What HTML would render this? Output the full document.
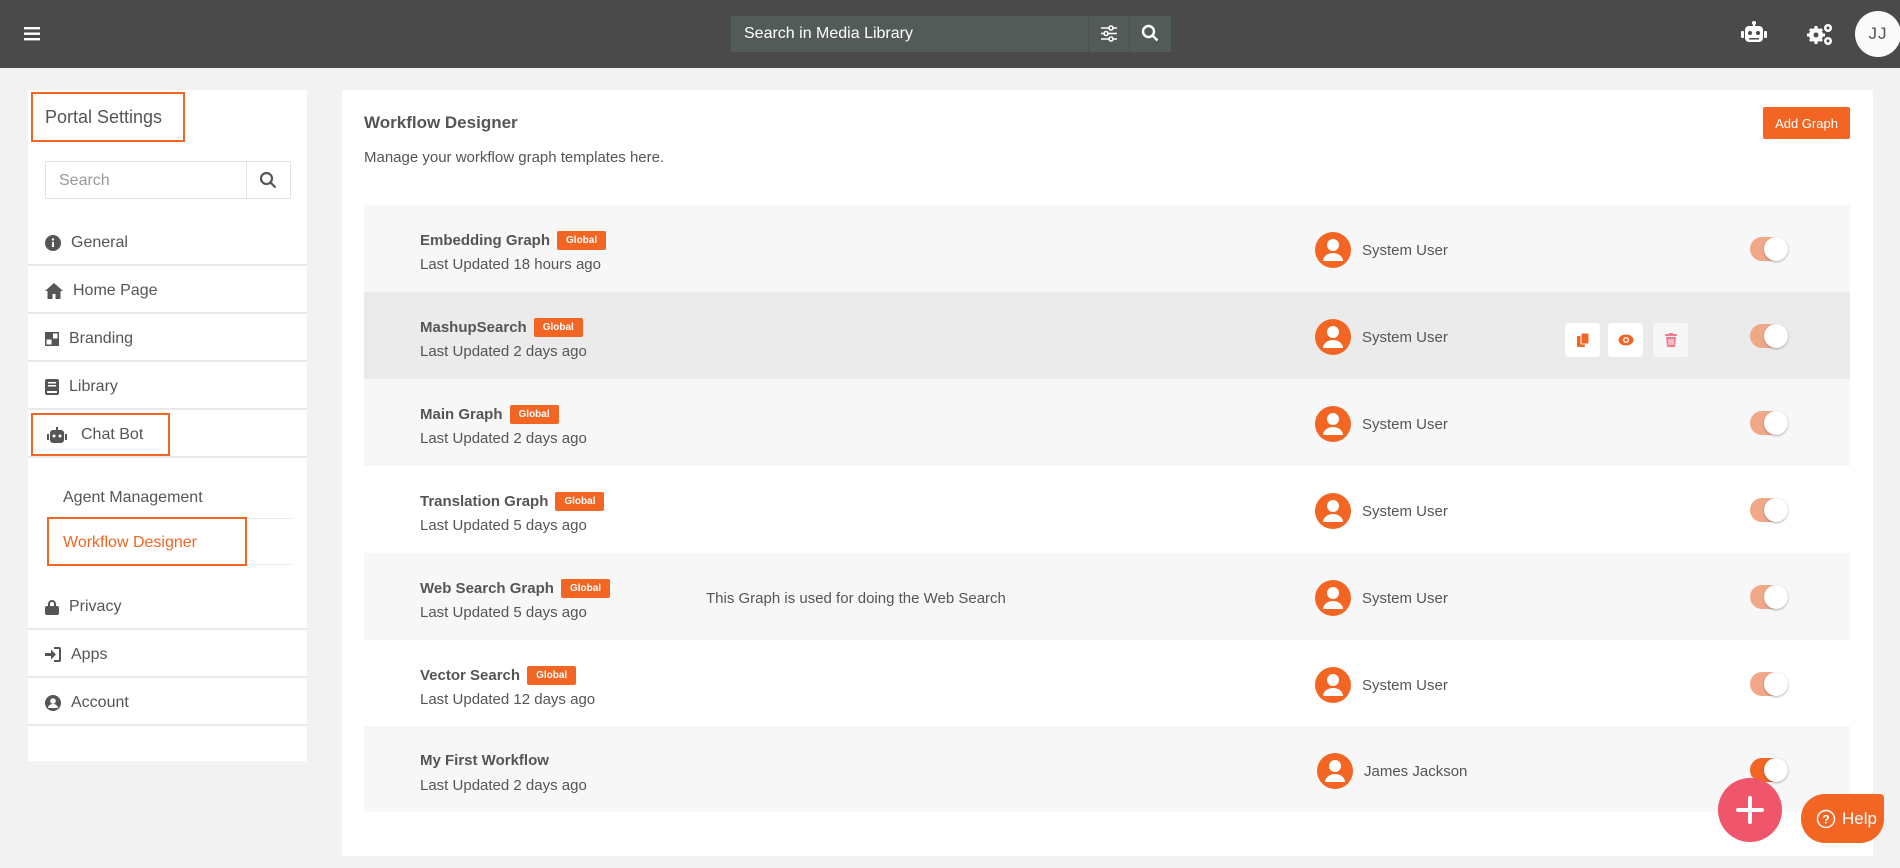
<!DOCTYPE html>
<html><head><meta charset="utf-8"><style>
*{box-sizing:border-box;margin:0;padding:0}
body{width:1900px;height:868px;background:#f2f2f2;font-family:"Liberation Sans",sans-serif;color:#555;position:relative;overflow:hidden}
.a{position:absolute}
.hdr{left:0;top:0;width:1900px;height:68px;background:#4a4a4a}
.side{left:28px;top:90px;width:279px;height:671px;background:#fff}
.nav{left:28px;width:279px;height:48px;border-bottom:2px solid #e8e8e8;font-size:16px;display:flex;align-items:center;padding-left:17px;padding-top:3px;color:#555}
.nav svg{margin-right:10px}
.box{border:2px solid #f26522}
.main{left:342px;top:90px;width:1531px;height:766px;background:#fff}
.row{left:364px;width:1486px;height:87px}
.t{left:56px;top:26px;font-size:15px;font-weight:bold;color:#555;display:flex;align-items:center}
.b{background:#f26522;color:#fff;font-size:10px;font-weight:bold;padding:4px 9px;margin-left:7px;border-radius:2px}
.s{left:56px;top:51px;font-size:15px;color:#555}
.av{left:951px;top:27px;width:36px;height:36px;border-radius:50%;background:#f26522;overflow:hidden}
.nm{left:998px;top:37px;font-size:15px}
.tg{left:1386px;top:32px;width:38px;height:24px;border-radius:12px;background:#f0a889}
.tg::after{content:"";position:absolute;right:0;top:0;width:24px;height:24px;border-radius:50%;background:#fff;box-shadow:0 1px 2px rgba(0,0,0,.3)}
.ab{top:31px;width:35px;height:34px;background:#fff;border-radius:3px;display:flex;align-items:center;justify-content:center}
</style></head><body>
<div class="a hdr"></div>
<svg class="a" style="left:24px;top:27px" width="16" height="14"><rect y="0" width="16" height="2.4" fill="#fff"/><rect y="5.5" width="16" height="2.4" fill="#fff"/><rect y="11" width="16" height="2.4" fill="#fff"/></svg>
<div class="a" style="left:731px;top:16px;width:440px;height:36px;background:#535b59"></div>
<div class="a" style="left:1088px;top:16px;width:1px;height:36px;background:#4a504e"></div>
<div class="a" style="left:1129px;top:16px;width:1px;height:36px;background:#4a504e"></div>
<div class="a" style="left:744px;top:25px;color:#fff;font-size:16px">Search in Media Library</div>
<svg class="a" style="left:1100px;top:25px" width="18" height="17" stroke="#fff" stroke-width="1.6" fill="none"><path d="M1 3h16M1 8.5h16M1 14h16"/><circle cx="11" cy="3" r="2" fill="#535b59"/><circle cx="6" cy="8.5" r="2" fill="#535b59"/><circle cx="11" cy="14" r="2" fill="#535b59"/></svg>
<svg class="a" style="left:1141px;top:24px" width="18" height="18" stroke="#fff" stroke-width="2.4" fill="none"><circle cx="7.5" cy="7.5" r="5.5"/><path d="M11.5 11.5l5 5"/></svg>
<svg class="a" style="left:1741px;top:21px" width="26" height="24" fill="#fff"><rect x="12" y="0" width="2" height="5"/><circle cx="13" cy="2" r="2"/><rect x="4" y="5" width="18" height="16" rx="4"/><rect x="0" y="10" width="3" height="7" rx="1"/><rect x="23" y="10" width="3" height="7" rx="1"/><circle cx="9" cy="12" r="2" fill="#4a4a4a"/><circle cx="17" cy="12" r="2" fill="#4a4a4a"/><rect x="8" y="17" width="10" height="1.5" fill="#4a4a4a"/></svg>
<svg class="a" style="left:1806px;top:22px" width="28" height="24" fill="#fff"><circle cx="10" cy="13" r="7"/><g stroke="#fff" stroke-width="3"><path d="M10 4v18M1 13h18M4 7l12 12M16 7L4 19"/></g><circle cx="10" cy="13" r="2.5" fill="#4a4a4a"/><circle cx="22" cy="6" r="4"/><circle cx="22" cy="6" r="1.5" fill="#4a4a4a"/><circle cx="22" cy="19" r="4"/><circle cx="22" cy="19" r="1.5" fill="#4a4a4a"/></svg>
<div class="a" style="left:1855px;top:11px;width:46px;height:46px;border-radius:50%;background:#fafafa;color:#555;font-size:17px;display:flex;align-items:center;justify-content:center;letter-spacing:1px">JJ</div>

<div class="a side"></div>
<div class="a box" style="left:31px;top:92px;width:154px;height:50px"></div>
<div class="a" style="left:45px;top:107px;font-size:18px;color:#555">Portal Settings</div>
<div class="a" style="left:45px;top:161px;width:246px;height:38px;border:1px solid #e3e3e3"></div>
<div class="a" style="left:246px;top:161px;width:1px;height:38px;background:#e3e3e3"></div>
<div class="a" style="left:59px;top:172px;font-size:16px;color:#999">Search</div>
<svg class="a" style="left:259px;top:171px" width="18" height="18" stroke="#555" stroke-width="2.2" fill="none"><circle cx="7.5" cy="7.5" r="5.5"/><path d="M11.5 11.5l5 5"/></svg>

<div class="a nav" style="top:218px"><svg width="16" height="16"><circle cx="8" cy="8" r="8" fill="#555"/><rect x="7" y="7" width="2" height="5" fill="#fff"/><circle cx="8" cy="4.5" r="1.2" fill="#fff"/></svg>General</div>
<div class="a nav" style="top:266px"><svg width="18" height="16" fill="#555"><path d="M9 0L0 8h2.5v8h5v-5h3v5h5V8H18z"/></svg>Home Page</div>
<div class="a nav" style="top:314px"><svg width="14" height="14"><rect width="14" height="14" fill="#555"/><rect x="8" y="1.5" width="4.5" height="5" fill="#fff"/><rect x="1.5" y="7.5" width="5" height="5" fill="#fff"/></svg>Branding</div>
<div class="a nav" style="top:362px"><svg width="14" height="16"><rect width="14" height="16" rx="2" fill="#555"/><rect x="3" y="3" width="8" height="1.5" fill="#fff"/><rect x="3" y="6" width="8" height="1.5" fill="#fff"/><rect x="2" y="12" width="10" height="2" fill="#fff"/></svg>Library</div>
<div class="a nav" style="top:410px;padding-left:19px"><svg width="20" height="16" fill="#555"><rect x="3" y="3" width="14" height="13" rx="3"/><rect x="9" y="0" width="2" height="3"/><rect x="0" y="7" width="2" height="6"/><rect x="18" y="7" width="2" height="6"/><circle cx="7" cy="9" r="1.5" fill="#fff"/><circle cx="13" cy="9" r="1.5" fill="#fff"/></svg><span style="margin-left:4px">Chat Bot</span></div>
<div class="a box" style="left:31px;top:413px;width:139px;height:43px"></div>
<div class="a" style="left:63px;top:489px;font-size:16px">Agent Management</div>
<div class="a" style="left:47px;top:518px;width:244px;height:1px;background:#e8e8e8"></div>
<div class="a" style="left:63px;top:534px;font-size:16px;color:#f26522">Workflow Designer</div>
<div class="a" style="left:47px;top:564px;width:244px;height:1px;background:#e8e8e8"></div>
<div class="a box" style="left:47px;top:517px;width:200px;height:49px"></div>
<div class="a nav" style="top:582px"><svg width="14" height="16" fill="#555"><path d="M3 7V5a4 4 0 018 0v2h-2V5a2 2 0 00-4 0v2z"/><rect y="7" width="14" height="9" rx="2"/></svg>Privacy</div>
<div class="a nav" style="top:630px"><svg width="16" height="15" fill="#555"><path d="M0 6h6V2.5L11 7.5 6 12.5V9H0z"/><path d="M9 0h5a2 2 0 012 2v11a2 2 0 01-2 2H9v-2h5V2H9z"/></svg>Apps</div>
<div class="a nav" style="top:678px"><svg width="16" height="16"><circle cx="8" cy="8" r="8" fill="#555"/><circle cx="8" cy="6" r="2.8" fill="#fff"/><path d="M3 13a5 4 0 0110 0z" fill="#fff"/></svg>Account</div>

<div class="a main"></div>
<div class="a" style="left:364px;top:113px;font-size:17px;font-weight:bold;color:#555">Workflow Designer</div>
<div class="a" style="left:364px;top:149px;font-size:15px;color:#555">Manage your workflow graph templates here.</div>
<div class="a" style="left:1763px;top:107px;width:87px;height:32px;background:#f26522;color:#fff;font-size:13px;border-radius:2px;display:flex;align-items:center;justify-content:center">Add Graph</div>

<div class="a row" style="top:205px;background:#f7f7f7"><div class="a t">Embedding Graph<span class="b">Global</span></div><div class="a s">Last Updated 18 hours ago</div><div class="a av"><svg width="36" height="36"><circle cx="18" cy="13" r="6" fill="#fff"/><path d="M8 29a10 8 0 0120 0z" fill="#fff"/></svg></div><div class="a nm">System User</div><div class="a tg"></div></div>
<div class="a row" style="top:292px;background:#ebebeb"><div class="a t">MashupSearch<span class="b">Global</span></div><div class="a s">Last Updated 2 days ago</div><div class="a av"><svg width="36" height="36"><circle cx="18" cy="13" r="6" fill="#fff"/><path d="M8 29a10 8 0 0120 0z" fill="#fff"/></svg></div><div class="a nm">System User</div>
<div class="a ab" style="left:1201px"><svg width="12" height="14" fill="#f26522"><rect x="0" y="3" width="8" height="11" rx="1"/><rect x="4" y="0" width="8" height="11" rx="1" stroke="#fff" stroke-width="1"/></svg></div>
<div class="a ab" style="left:1244px"><svg width="16" height="12"><ellipse cx="8" cy="6" rx="7.5" ry="5.5" fill="#f26522"/><circle cx="8" cy="6" r="3" fill="#fff"/><circle cx="8" cy="6" r="1.6" fill="#f26522"/></svg></div>
<div class="a ab" style="left:1289px;background:#f7f7f7"><svg width="12" height="14" fill="#ee7d8e"><rect x="0" y="1" width="12" height="2"/><rect x="4" y="0" width="4" height="2"/><path d="M1 4h10l-1 10H2z"/><g fill="#f7f7f7"><rect x="3.5" y="6" width="1" height="6"/><rect x="5.5" y="6" width="1" height="6"/><rect x="7.5" y="6" width="1" height="6"/></g></svg></div>
<div class="a tg"></div></div>
<div class="a row" style="top:379px;background:#f7f7f7"><div class="a t">Main Graph<span class="b">Global</span></div><div class="a s">Last Updated 2 days ago</div><div class="a av"><svg width="36" height="36"><circle cx="18" cy="13" r="6" fill="#fff"/><path d="M8 29a10 8 0 0120 0z" fill="#fff"/></svg></div><div class="a nm">System User</div><div class="a tg"></div></div>
<div class="a row" style="top:466px;background:#fff"><div class="a t">Translation Graph<span class="b">Global</span></div><div class="a s">Last Updated 5 days ago</div><div class="a av"><svg width="36" height="36"><circle cx="18" cy="13" r="6" fill="#fff"/><path d="M8 29a10 8 0 0120 0z" fill="#fff"/></svg></div><div class="a nm">System User</div><div class="a tg"></div></div>
<div class="a row" style="top:553px;background:#f7f7f7"><div class="a t">Web Search Graph<span class="b">Global</span></div><div class="a s">Last Updated 5 days ago</div><div class="a" style="left:342px;top:37px;font-size:15px">This Graph is used for doing the Web Search</div><div class="a av"><svg width="36" height="36"><circle cx="18" cy="13" r="6" fill="#fff"/><path d="M8 29a10 8 0 0120 0z" fill="#fff"/></svg></div><div class="a nm">System User</div><div class="a tg"></div></div>
<div class="a row" style="top:640px;background:#fff"><div class="a t">Vector Search<span class="b">Global</span></div><div class="a s">Last Updated 12 days ago</div><div class="a av"><svg width="36" height="36"><circle cx="18" cy="13" r="6" fill="#fff"/><path d="M8 29a10 8 0 0120 0z" fill="#fff"/></svg></div><div class="a nm">System User</div><div class="a tg"></div></div>
<div class="a row" style="top:726px;background:#f7f7f7;height:86px"><div class="a t">My First Workflow</div><div class="a s">Last Updated 2 days ago</div><div class="a av" style="left:953px"><svg width="36" height="36"><circle cx="18" cy="13" r="6" fill="#fff"/><path d="M8 29a10 8 0 0120 0z" fill="#fff"/></svg></div><div class="a nm" style="left:1000px">James Jackson</div><div class="a tg" style="background:#f26522"></div></div>

<div class="a" style="left:1718px;top:778px;width:64px;height:64px;border-radius:50%;background:#ef566c"></div>
<svg class="a" style="left:1736px;top:796px" width="28" height="28"><rect x="12" y="0" width="4" height="28" rx="2" fill="#fff"/><rect x="0" y="12" width="28" height="4" rx="2" fill="#fff"/></svg>
<div class="a" style="left:1801px;top:794px;width:83px;height:49px;background:#f26522;border-radius:24px 4px 24px 24px;color:#fff;font-size:17px;display:flex;align-items:center;padding-left:15px"><svg width="20" height="20" style="margin-right:6px"><circle cx="10" cy="10" r="8.5" stroke="#fff" stroke-width="1.5" fill="none"/><text x="10" y="14.5" font-size="12" font-weight="bold" fill="#fff" text-anchor="middle" font-family="Liberation Sans">?</text></svg>Help</div>
</body></html>
